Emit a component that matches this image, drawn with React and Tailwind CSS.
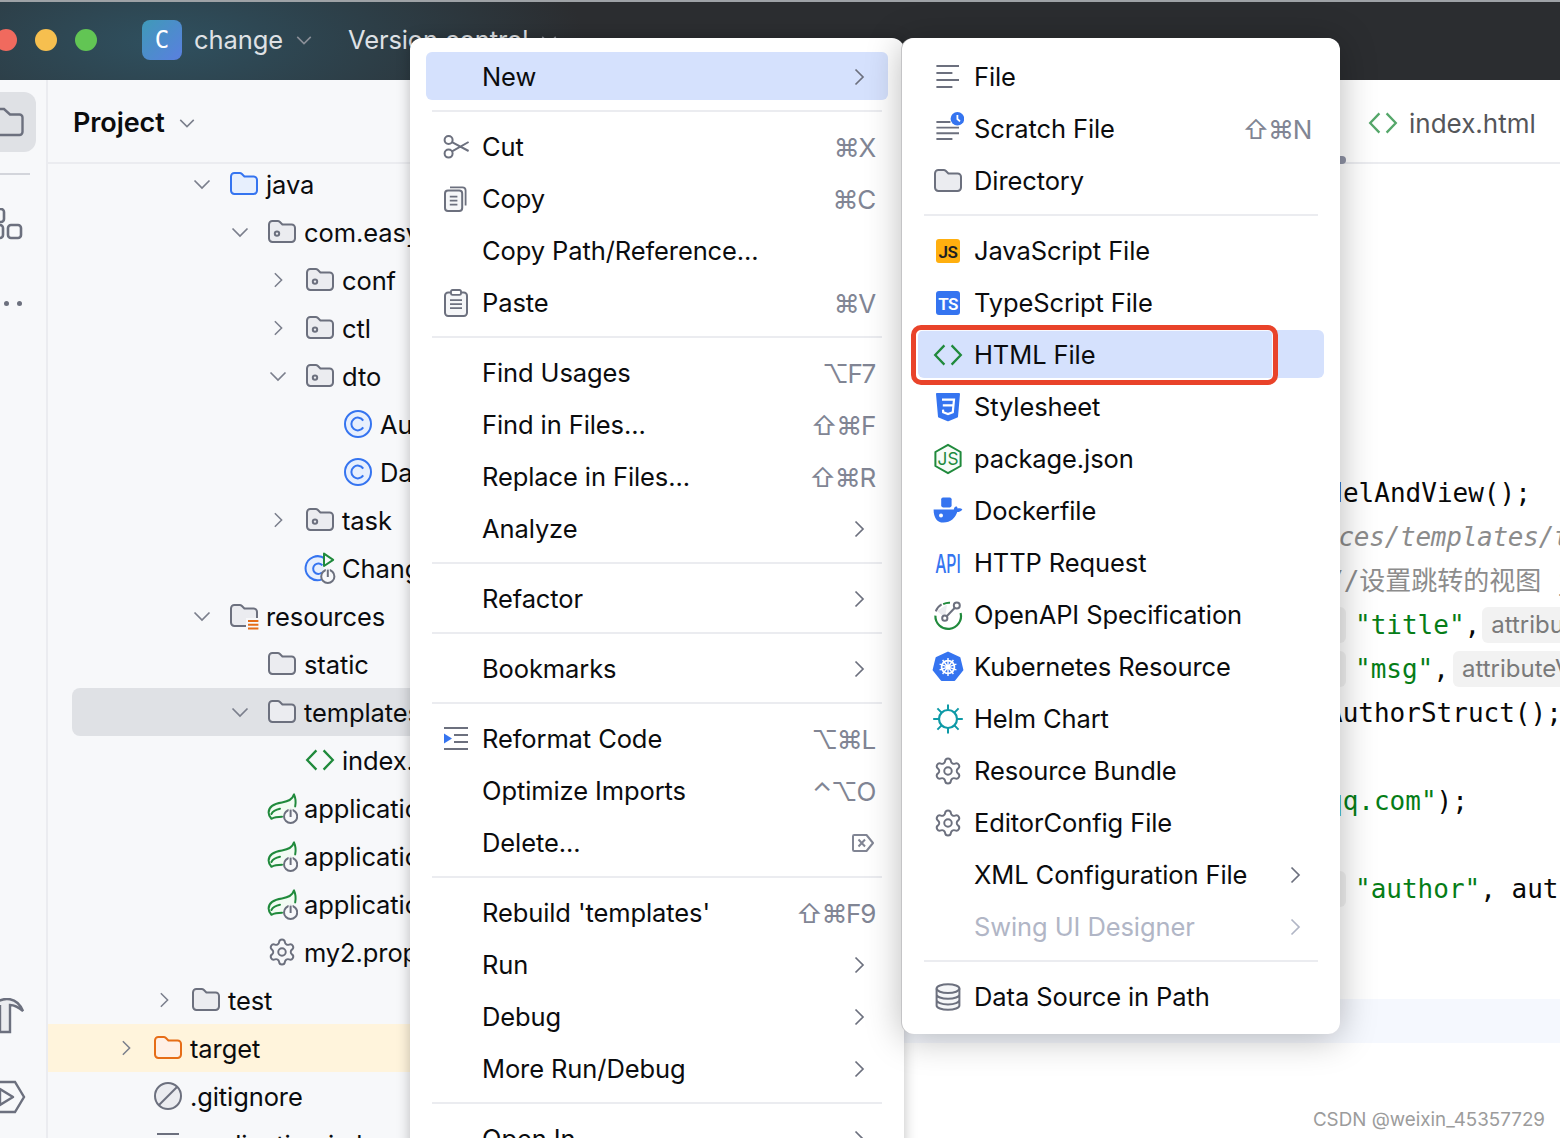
import React from "react";
import { Settings } from "lucide-react";

const G = "#6c707e";
const FOLDER = "M1.5 4.2C1.5 3.26 2.26 2.5 3.2 2.5H5.9c.35 0 .68.13.94.36L8.2 4.2h4.6c.94 0 1.7.76 1.7 1.7v5.4c0 .94-.76 1.7-1.7 1.7H3.2c-.94 0-1.7-.76-1.7-1.7V4.2Z";

const S = ({ children, w = 32, h = 32, vb = "0 0 16 16", className = "" }) => (
  <svg width={w} height={h} viewBox={vb} fill="none" className={`shrink-0 ${className}`}>{children}</svg>
);

const Chevron = ({ dir = "right", size = 20, color = G }) => (
  <svg width={size} height={size} viewBox="0 0 20 20" fill="none" className="shrink-0">
    <path d={dir === "right" ? "M6.5 2.5 14 10l-7.5 7.5" : "M2.5 6.5 10 14l7.5-7.5"} stroke={color} strokeWidth="1.7" />
  </svg>
);

const Folder = ({ stroke = G, fill = "#ebecf0" }) => (
  <S><path d={FOLDER} fill={fill} stroke={stroke} /></S>
);
const Pkg = () => (
  <S><path d={FOLDER} fill="#ebecf0" stroke={G} /><circle cx="5.5" cy="8.8" r="1.1" fill="none" stroke={G} /></S>
);
const ResFolder = () => (
  <S>
    <path d={FOLDER} fill="#ebecf0" stroke={G} />
    <rect x="9" y="9" width="7" height="6.5" fill="#f7f8fa" />
    <path d="M10 10.5h5.2M10 12.4h5.2M10 14.3h5.2" stroke="#e66d17" strokeWidth="1" />
  </S>
);
const ClassIcon = () => (
  <S><circle cx="8" cy="8" r="6.5" fill="#e7effd" stroke="#3574f0" /><path d="M10.6 6.3A3.2 3.2 0 1 0 10.6 9.7" stroke="#3574f0" /></S>
);
const Power = ({ cx = 12, cy = 12.4 }) => (
  <g>
    <circle cx={cx} cy={cy} r="3.3" fill="#f7f8fa" stroke={G} />
    <path d={`M${cx} ${cy - 4}V${cy}`} stroke="#f7f8fa" strokeWidth="2" />
    <path d={`M${cx} ${cy - 3.4}V${cy + 0.3}`} stroke={G} />
  </g>
);
const AppIcon = () => (
  <S>
    <path d="M10.5 3.4A6 6 0 1 0 9 13.7" stroke="#3574f0" fill="#e7effd" />
    <path d="M9.2 6.7A2.6 2.6 0 1 0 9 10.2" stroke="#3574f0" />
    <path d="M10 .8 14.6 3.9 10 7Z" fill="#f7f8fa" stroke="#208a3c" strokeLinejoin="round" />
    <Power cx={11.9} cy={12.2} />
  </S>
);
const Spring = () => (
  <S>
    <path d="M14 1.200C13.300 3.600 10.800 4.800 8 5.200 4.200 5.700 1.300 7.300 1.300 10.300c0 1.100.5 2.200 1.400 3.100 1.200-.7 3-1 5-1 3.500 0 6-1.500 6.800-4.400C15 6 14.800 3 14 1.200Z" fill="#f2fcf3" />
    <path d="M14 1.200C13.300 3.600 10.800 4.800 8 5.200 4.200 5.700 1.300 7.300 1.300 10.300c0 1.100.5 2.200 1.400 3.100M2.700 13.400C4 12.700 5.800 12.400 8 12.400M14 1.200C14.800 3 15 5.200 14.600 7.200M2.700 11C3.300 9.800 5 8.800 7 8.400" stroke="#208a3c" strokeLinecap="round" />
    <Power cx={12.3} cy={12.2} />
  </S>
);
const Gear = () => <Settings size={30} strokeWidth={1.55} color={G} className="shrink-0 mx-px" />;
const HtmlIcon = ({ color = "#208a3c" }) => (
  <S><path d="M6.2 3.2 1.6 8l4.6 4.8M9.8 3.2 14.4 8l-4.6 4.8" stroke={color} strokeWidth="1.15" /></S>
);
const Ignore = () => (
  <S><circle cx="8" cy="8" r="6.5" fill="#ebecf0" stroke={G} /><path d="M3.5 12.5 12.5 3.5" stroke={G} /></S>
);
const LinesTop = () => (
  <S><path d="M2.5 3h11M2.5 8h8" stroke={G} strokeWidth="1" /></S>
);

const rows = [
  { t: "java", l: 0, c: "down", i: <Folder stroke="#3574f0" fill="#e7effd" /> },
  { t: "com.easyjava", l: 1, c: "down", i: <Pkg /> },
  { t: "conf", l: 2, c: "right", i: <Pkg /> },
  { t: "ctl", l: 2, c: "right", i: <Pkg /> },
  { t: "dto", l: 2, c: "down", i: <Pkg /> },
  { t: "AuthorStruct", l: 3, i: <ClassIcon /> },
  { t: "DataStruct", l: 3, i: <ClassIcon /> },
  { t: "task", l: 2, c: "right", i: <Pkg /> },
  { t: "ChangeApplication", l: 2, i: <AppIcon /> },
  { t: "resources", l: 0, c: "down", i: <ResFolder /> },
  { t: "static", l: 1, i: <Folder /> },
  { t: "templates", l: 1, c: "down", i: <Folder />, sel: true },
  { t: "index.html", l: 2, i: <HtmlIcon /> },
  { t: "application.yml", l: 1, i: <Spring /> },
  { t: "application-dev.yml", l: 1, i: <Spring /> },
  { t: "application-prod.yml", l: 1, i: <Spring /> },
  { t: "my2.properties", l: 1, i: <Gear /> },
  { t: "test", l: -1, c: "right", i: <Folder /> },
  { t: "target", l: -2, c: "right", i: <Folder stroke="#e66d17" fill="#fff0e6" />, hl: true },
  { t: ".gitignore", l: -2, i: <Ignore /> },
  { t: "application.iml", l: -2, i: <LinesTop /> },
];

const pad = { "-2": "pl-[66px]", "-1": "pl-[104px]", 0: "pl-[142px]", 1: "pl-[180px]", 2: "pl-[218px]", 3: "pl-[256px]" };

function TreeRow({ r }) {
  const base = "flex items-center h-[48px] whitespace-nowrap";
  const cls = r.sel
    ? `${base} ml-6 pl-[156px] bg-[#dfe1e5] rounded-lg`
    : `${base} ${pad[r.l]} ${r.hl ? "bg-[#fff4dc]" : ""}`;
  return (
    <div className={cls}>
      <span className="w-6 h-6 mr-[14px] flex items-center justify-center shrink-0">
        {r.c && <Chevron dir={r.c} size={r.c === "down" ? 20 : 18} color="#7b7f8c" />}
      </span>
      {r.i}
      <span className="ml-[6px] pt-[2px] text-[25.5px] tracking-[-0.1px] text-[#0b0c0e]">{r.t}</span>
    </div>
  );
}

/* menu icons */
const Cut = () => (
  <S>
    <circle cx="4.300" cy="4.500" r="2" stroke={G} />
    <circle cx="4.300" cy="11.300" r="2" stroke={G} />
    <path d="M6 5.600 14.300 10M6 10.200 14.300 5.500" stroke={G} />
  </S>
);
const Copy = () => (
  <S>
    <path d="M5 2.2h6.2c.9 0 1.6.7 1.6 1.6v7.4" stroke={G} strokeWidth=".9" />
    <rect x="2.5" y="3.8" width="8.6" height="10.2" rx="1.5" fill="#f5f6f8" stroke={G} />
    <path d="M4.9 6.8h3.8M4.9 8.8h3.8M4.9 10.8h3.8" stroke={G} strokeWidth=".9" />
  </S>
);
const Paste = () => (
  <S>
    <rect x="2.5" y="2.8" width="11" height="11.7" rx="1.6" fill="#f5f6f8" stroke={G} />
    <rect x="5.5" y="1.5" width="5" height="2.4" rx=".8" fill="#fff" stroke={G} strokeWidth=".9" />
    <path d="M5 6.6h6M5 8.6h6M5 10.6h6" stroke={G} strokeWidth=".9" />
  </S>
);
const Reformat = () => (
  <S>
    <path d="M2 2.5h12M7 6h7M7 9.500h7M2 13h12" stroke={G} strokeWidth="1" />
    <path d="M2 5.300 6 7.800 2 10.200Z" fill="#3574f0" />
  </S>
);
const FileLines = () => (
  <S className="-mt-[2px]"><path d="M2.200 3h11.300M2.200 6.500h8M2.200 10h11.300M2.200 13.500h8" stroke={G} strokeWidth=".95" /></S>
);
const Scratch = () => (
  <S className="-mt-[2px]">
    <path d="M2.200 5h7M2.200 7.800h11.300M2.200 10.600h11.300M2.200 13.500h8" stroke={G} strokeWidth=".95" />
    <circle cx="12.700" cy="3.400" r="3.400" fill="#3574f0" />
    <path d="M12.700 1.500v2l1.300 1.200" stroke="#fff" strokeWidth=".9" />
  </S>
);
const Badge = ({ bg, fg, t }) => (
  <span className="w-8 h-8 shrink-0 flex items-center justify-center">
    <span className={`w-6 h-6 rounded-[3px] flex items-end justify-center text-[17px] leading-[21px] font-semibold tracking-[-0.5px] font-['Roboto',sans-serif] ${bg} ${fg}`}>{t}</span>
  </span>
);
const Css = () => (
  <S>
    <path d="M2.500 1.500h11l-1 11.300L8 14.600l-4.500-1.800Z" fill="#3574f0" stroke="#3574f0" strokeLinejoin="round" />
    <path d="M5 4.300h6l-.6 6.300L8 11.500l-2.400-.9-.1-1.300M5.400 7.200h5.100" stroke="#fff" strokeWidth="1.100" />
  </S>
);
const Node = () => (
  <S>
    <path d="M8 .9 14.300 4.500v7L8 15.100 1.700 11.500v-7Z" fill="#f7fcf8" stroke="#208a3c" strokeLinejoin="round" />
    <text x="8" y="11" textAnchor="middle" fontSize="8.600" fontFamily="Inter, sans-serif" fill="#208a3c">JS</text>
  </S>
);
const Docker = () => (
  <S>
    <rect x="4.600" y="1.200" width="5.200" height="5" rx=".9" fill="#3574f0" />
    <path d="M.8 7.200H10.900c.2-1.100.8-1.700 1.500-1.400.2.300.4.700.4 1 .8-.3 1.800-.2 2.400.4-.7 1-1.700 1.300-2.600 1.300C11.800 11.300 9.300 13.800 5.700 13.800 2.600 13.800.8 11.300.8 7.200Z" fill="#3574f0" />
    <circle cx="4.500" cy="10.300" r="1" fill="#fff" />
  </S>
);
const Api = () => (
  <S><text x="1.600" y="12.800" fontSize="13" fontFamily="Inter, sans-serif" fontWeight="500" fill="#3574f0" textLength="12.800" lengthAdjust="spacingAndGlyphs">API</text></S>
);
const OpenApi = () => (
  <S>
    <path d="M1.900 6.200A6.400 6.400 0 0 1 4.800 2.700" stroke={G} />
    <path d="M5.600 2.600A6.400 6.400 0 0 1 9 1.900" stroke="#208a3c" />
    <path d="M1.700 8.300A6.400 6.400 0 1 0 14.300 7" stroke="#208a3c" strokeWidth="1.100" />
    <path d="M2.500 6 7.500 2.800 6.500 9.500Z" fill="#ebecf0" />
    <path d="M7 9 11.800 4" stroke={G} />
    <circle cx="6.400" cy="9.600" r="1.300" fill="#fff" stroke={G} />
    <circle cx="12.400" cy="3.300" r="1.500" fill="#fff" stroke={G} />
  </S>
);
const K8s = () => (
  <S>
    <path d="M8 .8 13.700 3.400 15.200 9.500 11.200 14.500H4.800L.8 9.500 2.300 3.400Z" fill="#3574f0" stroke="#3574f0" strokeLinejoin="round" />
    <circle cx="8" cy="8" r="3.200" stroke="#fff" strokeWidth=".9" />
    <path d="M8 3.500v9M3.800 6.600l8.400 2.800M12.200 6.600l-8.400 2.800M5.300 4.500l5.400 7M10.700 4.500l-5.400 7" stroke="#fff" strokeWidth=".7" />
    <circle cx="8" cy="8" r="1" fill="#fff" />
  </S>
);
const Helm = () => (
  <S>
    <circle cx="8" cy="8" r="4.500" stroke="#0e9aa7" strokeWidth="1.100" />
    <path d="M8 .8v3M8 12.200v3M.6 8h3M12.400 8h3M2.700 2.700l2.100 2.100M11.200 11.200l2.100 2.100M13.300 2.700l-2.100 2.100M4.800 11.200l-2.100 2.100" stroke="#0e9aa7" strokeWidth="1" />
  </S>
);
const Db = () => (
  <S>
    <path d="M2.300 3.800v8.400c0 1.200 2.500 2.200 5.700 2.200s5.700-1 5.700-2.200V3.800" fill="#f5f6f8" />
    <ellipse cx="8" cy="3.800" rx="5.700" ry="2.200" fill="#f5f6f8" stroke={G} />
    <path d="M2.300 3.800v8.400c0 1.200 2.500 2.200 5.700 2.200s5.700-1 5.700-2.200V3.800M2.300 6.700c0 1.200 2.500 2.200 5.700 2.200s5.700-1 5.700-2.200M2.300 9.500c0 1.200 2.500 2.200 5.700 2.200s5.700-1 5.700-2.200" stroke={G} />
  </S>
);
const Del = () => (
  <svg width="24" height="20" viewBox="0 0 24 20" fill="none" className="shrink-0">
    <path d="M2 3.200C2 2.500 2.500 2 3.200 2H15.500L22 10l-6.500 8H3.200C2.500 18 2 17.500 2 16.800Z" stroke="#818594" strokeWidth="2" strokeLinejoin="round" />
    <path d="M7.500 6.500l6.500 7M14 6.500l-6.500 7" stroke="#818594" strokeWidth="2" />
  </svg>
);
const Spacer = () => <span className="w-8 h-8 shrink-0" />;

function Row({ icon, label, sc, arrow, active, disabled, gap = "mr-[10px]" }) {
  return (
    <div className="h-[52px] mx-4 pt-px">
      <div className={`h-12 rounded-md pl-[14px] pr-[13px] pt-[2px] flex items-center ${active ? "bg-[#d5e1fd]" : ""}`}>
        {icon || <Spacer />}
        <span className={`${gap} shrink-0`} />
        <span className={`text-[25.5px] tracking-[-0.1px] whitespace-nowrap ${disabled ? "text-[#b1b6c6]" : "text-[#0b0c0e]"}`}>{label}</span>
        <span className="flex-1" />
        {sc && <span className="text-[26px] tracking-[-1.3px] whitespace-nowrap text-[#818594] font-['Inter','DejaVu_Sans',sans-serif]">{sc}</span>}
        {arrow && <span className="mr-[6px]"><Chevron color={disabled ? "#b1b6c6" : "#6c707e"} size={20} /></span>}
      </div>
    </div>
  );
}
const Sep = () => (
  <div className="h-[18px] mx-[22px] pb-[2px] flex items-center"><div className="h-[2px] w-full bg-[#ebecf0]" /></div>
);

const main = [
  { label: "New", arrow: true, active: true }, 0,
  { label: "Cut", icon: <Cut />, sc: "⌘X" },
  { label: "Copy", icon: <Copy />, sc: "⌘C" },
  { label: "Copy Path/Reference..." },
  { label: "Paste", icon: <Paste />, sc: "⌘V" }, 0,
  { label: "Find Usages", sc: "⌥F7" },
  { label: "Find in Files...", sc: "⇧⌘F" },
  { label: "Replace in Files...", sc: "⇧⌘R" },
  { label: "Analyze", arrow: true }, 0,
  { label: "Refactor", arrow: true }, 0,
  { label: "Bookmarks", arrow: true }, 0,
  { label: "Reformat Code", icon: <Reformat />, sc: "⌥⌘L" },
  { label: "Optimize Imports", sc: "⌃⌥O" },
  { label: "Delete...", sc: <Del /> }, 0,
  { label: "Rebuild 'templates'", sc: "⇧⌘F9" },
  { label: "Run", arrow: true },
  { label: "Debug", arrow: true },
  { label: "More Run/Debug", arrow: true }, 0,
  { label: "Open In", arrow: true },
];

const sub = [
  { label: "File", icon: <FileLines /> },
  { label: "Scratch File", icon: <Scratch />, sc: "⇧⌘N" },
  { label: "Directory", icon: <Folder /> }, 0,
  { label: "JavaScript File", icon: <Badge bg="bg-[#ffaf0f]" fg="text-[#1e1f22]" t="JS" /> },
  { label: "TypeScript File", icon: <Badge bg="bg-[#3574f0]" fg="text-white" t="TS" /> },
  { label: "HTML File", icon: <HtmlIcon />, active: true },
  { label: "Stylesheet", icon: <Css /> },
  { label: "package.json", icon: <Node /> },
  { label: "Dockerfile", icon: <Docker /> },
  { label: "HTTP Request", icon: <Api /> },
  { label: "OpenAPI Specification", icon: <OpenApi /> },
  { label: "Kubernetes Resource", icon: <K8s /> },
  { label: "Helm Chart", icon: <Helm /> },
  { label: "Resource Bundle", icon: <Gear /> },
  { label: "EditorConfig File", icon: <Gear /> },
  { label: "XML Configuration File", arrow: true },
  { label: "Swing UI Designer", arrow: true, disabled: true }, 0,
  { label: "Data Source in Path", icon: <Db /> },
];

const Str = ({ children }) => <span className="text-[#067d17]">{children}</span>;
const Chip = ({ children, className = "" }) => (
  <span className={`h-9 rounded-md bg-[#f2f2f2] px-[9px] flex items-center shrink-0 text-[24px] text-[#7a7a7a] font-['Inter',sans-serif] ${className}`}>{children}</span>
);
const Line = ({ pl = "pl-[624px]", children, cls = "" }) => (
  <div className={`h-11 flex items-center whitespace-pre ${pl} ${cls}`}>{children}</div>
);

export default function App() {
  return (
    <div className="relative w-[1560px] h-[1138px] overflow-hidden bg-white font-['Inter','Noto_Sans_CJK_SC',sans-serif] flex flex-col">
      {/* Title bar */}
      <header className="h-20 shrink-0 border-t-2 border-[#9ea2a6] pb-[2px] bg-[radial-gradient(ellipse_420px_150px_at_170px_40px,#2f505f,#2b2d30)] flex items-center pl-0 -ml-[5px] w-[1565px]">
        <span className="w-[22px] h-[22px] rounded-full bg-[#f06a5e]" />
        <span className="w-[22px] h-[22px] rounded-full bg-[#f6bf4f] ml-[18px]" />
        <span className="w-[22px] h-[22px] rounded-full bg-[#62c554] ml-[18px]" />
        <span className="w-10 h-10 ml-[45px] rounded-lg bg-[linear-gradient(135deg,#3f9ab8,#5a7fe0)] flex items-center justify-center text-white text-[24px] font-['DejaVu_Sans_Mono',monospace]">C</span>
        <span className="ml-3 text-[25.5px] tracking-[-0.1px] text-[#dfe1e5]">change</span>
        <span className="ml-3"><Chevron dir="down" size={18} color="#8b8f98" /></span>
        <span className="ml-[35px] text-[25.5px] tracking-[-0.1px] text-[#dfe1e5] whitespace-nowrap">Version control</span>
        <span className="ml-3"><Chevron dir="down" size={18} color="#8b8f98" /></span>
      </header>

      <div className="flex-1 flex min-h-0">
        {/* Tool strip */}
        <aside className="w-12 shrink-0 bg-[#f7f8fa] border-r-2 border-[#ebecf0] flex flex-col">
          <div className="mt-3 w-9 h-[60px] rounded-r-xl bg-[#dfe1e5]">
            <svg width="36" height="60" viewBox="0 92 36 60" fill="none">
              <path d="M-2 109H4L10 114.500H19.500a3 3 0 0 1 3 3V132a3 3 0 0 1-3 3H-2" stroke={G} strokeWidth="2.400" />
            </svg>
          </div>
          <div className="mt-[21px] w-[30px] h-[2px] bg-[#d3d5db]" />
          <svg className="mt-[33px]" width="36" height="32" viewBox="0 208 36 32" fill="none">
            <rect x="-10" y="209" width="14" height="13" rx="3" stroke={G} strokeWidth="2.600" />
            <rect x="-10" y="225" width="13" height="13" rx="3" stroke={G} strokeWidth="2.600" />
            <rect x="8" y="225" width="13" height="13" rx="3" stroke={G} strokeWidth="2.600" />
          </svg>
          <div className="mt-[61px] pl-1 flex gap-2">
            <span className="w-[5px] h-[5px] rounded-full bg-[#6c707e]" />
            <span className="w-[5px] h-[5px] rounded-full bg-[#6c707e]" />
          </div>
          <div className="flex-1" />
          <svg width="36" height="36" viewBox="0 1000 36 36" fill="none">
            <path d="M-6 1006C4 998 17 999 23 1013 17 1008 14 1007 10 1007V1034H0V1007" stroke={G} strokeWidth="2.400" fill="#ebecf0" />
          </svg>
          <svg className="mt-[46px] mb-6" width="36" height="34" viewBox="0 1081 36 34" fill="none">
            <path d="M-6 1083H15L24 1098 15 1113H-6Z" stroke={G} strokeWidth="2.400" />
            <path d="M0 1090 13 1098 0 1106Z" stroke={G} strokeWidth="2.400" strokeLinejoin="round" />
          </svg>
        </aside>

        {/* Project */}
        <section className="w-[624px] shrink-0 bg-[#f7f8fa] flex flex-col">
          <div className="h-[84px] shrink-0 border-b-2 border-[#ebecf0] flex items-center pl-[25px] pt-[4px]">
            <span className="text-[27px] font-semibold tracking-[-0.1px] text-[#0b0c0e]">Project</span>
            <span className="ml-[13px]"><Chevron dir="down" size={18} color="#7b7f8c" /></span>
          </div>
          <div className="-mt-[4px]">
            {rows.map((r) => <TreeRow key={r.t} r={r} />)}
          </div>
        </section>

        {/* Editor */}
        <section className="flex-1 min-w-0 flex flex-col bg-white">
          <div className="h-[84px] shrink-0 border-b-2 border-[#ebecf0] flex">
            <div className="relative w-[674px] shrink-0">
              <span className="absolute right-0 left-0 -bottom-[2px] h-2 rounded-full bg-[#8f93a6]" />
            </div>
            <div className="ml-[21px] flex items-center gap-[10px] pt-[4px]">
              <HtmlIcon color="#55a76a" />
              <span className="text-[26px] text-[#55565a]">index.html</span>
            </div>
          </div>
          <div className="pt-[307px] text-[26px] text-[#080808] font-['DejaVu_Sans_Mono','Noto_Sans_CJK_SC',monospace]">
            <Line>ModelAndView();</Line>
            <Line pl="pl-[574px]" cls="italic text-[#8c8c8c] tracking-[-0.25px]">resources/templates/templates</Line>
            <Line pl="pl-[656px]" cls="text-[#8c8c8c]">//设置跳转的视图 j</Line>
            <Line pl="pl-[574px]">
              <Chip className="w-[100px] mr-[9px]" />
              <Str>"title"</Str>,<Chip className="ml-[2px]">attributeName:</Chip>
            </Line>
            <Line pl="pl-[574px]">
              <Chip className="w-[100px] mr-[9px]" />
              <Str>"msg"</Str>,<Chip className="ml-[4px]">attributeValue:</Chip>
            </Line>
            <Line pl="pl-[655px]">AuthorStruct();</Line>
            <Line />
            <Line pl="pl-[655px]"><Str>qq.com"</Str>);</Line>
            <Line />
            <Line pl="pl-[574px]">
              <Chip className="w-[100px] mr-[9px]" />
              <Str>"author"</Str>, author);
            </Line>
            <Line />
            <Line />
            <Line cls="bg-[#f5f8fe]" />
          </div>
        </section>
      </div>

      {/* Context menu */}
      <div className="absolute left-[410px] top-[38px] w-[494px] h-[1200px] pt-[13px] bg-white rounded-t-xl shadow-[0_0_14px_rgba(0,0,0,0.25)] z-10">
        {main.map((m, i) => (m === 0 ? <Sep key={i} /> : <Row key={i} {...m} />))}
      </div>

      {/* Submenu */}
      <div className="absolute left-[902px] top-[38px] w-[438px] h-[996px] pt-[13px] bg-white rounded-xl shadow-[-1px_0_0_#c4c4c6,0_4px_36px_rgba(0,0,0,0.28)] z-20">
        {sub.map((m, i) => (m === 0 ? <Sep key={i} /> : <Row key={i} gap="mr-[10px]" {...m} />))}
      </div>

      {/* Annotation */}
      <div className="absolute left-[911px] top-[325px] w-[367px] h-[60px] rounded-[10px] border-[5px] border-[#e9432a] shadow-[inset_0_0_0_1px_rgba(255,255,255,0.8)] z-30" />

      <div className="absolute right-[15px] top-[1106px] text-[18.8px] text-[#9c9c9c] z-30 whitespace-nowrap">CSDN @weixin_45357729</div>
    </div>
  );
}
